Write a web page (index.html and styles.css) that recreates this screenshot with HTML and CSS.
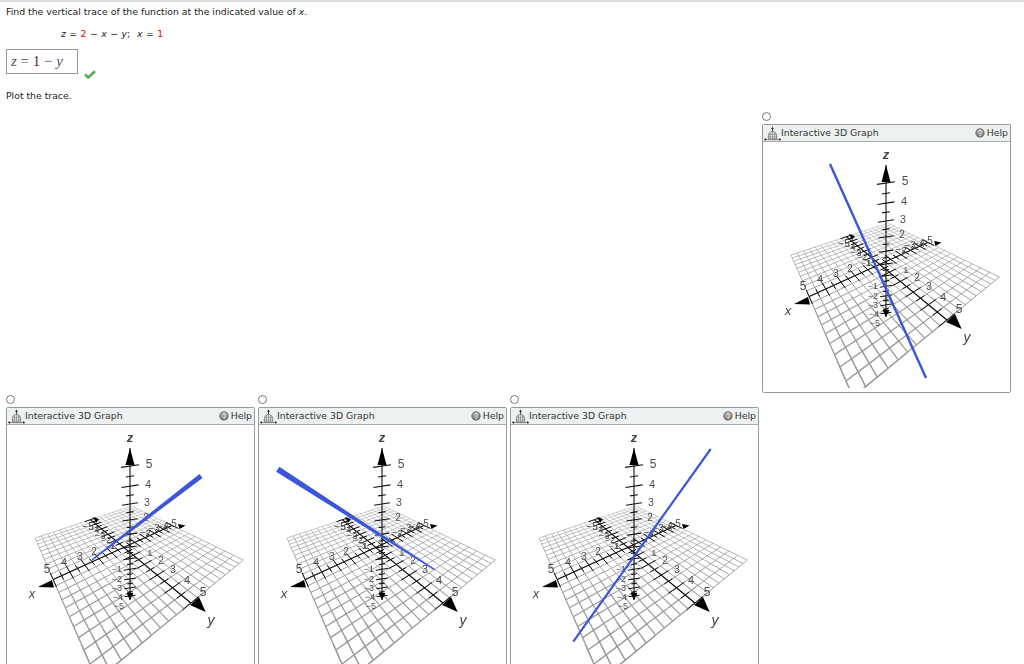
FILE: index.html
```html
<!DOCTYPE html>
<html lang="en">
<head>
<meta charset="utf-8">
<title>Vertical trace</title>
<link rel="stylesheet" href="styles.css">
</head>
<body>
<main class="page">
  <p class="question">Find the vertical trace of the function at the indicated value of <i>x</i>.</p>
  <p class="equation"><i>z</i> = <span class="given">2</span> − <i>x</i> − <i>y</i>;&nbsp; <i>x</i> = <span class="given">1</span></p>
  <div class="answer-row">
    <div class="answer"><i>z</i> = <span class="num">1</span> − <i>y</i></div>
    <svg class="check" viewBox="0 0 12 9"><path d="M1 4.5 L4.2 7.5 L11 1.2"/></svg>
  </div>
  <p class="plot">Plot the trace.</p>

  <div class="choices choices-top">
    <div class="choice">
      <input class="radio" type="radio" name="trace">
      <section class="graph">
        <header class="graph-head"><svg class="turtle" viewBox="0 0 20 17"><use href="#turtle-icon"/></svg><span class="graph-title">Interactive 3D Graph</span><span class="help"><svg class="help-icon" viewBox="0 0 10 10"><use href="#help-icon"/></svg>Help</span></header>
        <svg class="plot3d" viewBox="1 17 247 251"><line class="trace trace-mid" x1="68" y1="39" x2="164" y2="253"/></svg>
      </section>
    </div>
  </div>

  <div class="choices">
    <div class="choice">
      <input class="radio" type="radio" name="trace">
      <section class="graph">
        <header class="graph-head"><svg class="turtle" viewBox="0 0 20 17"><use href="#turtle-icon"/></svg><span class="graph-title">Interactive 3D Graph</span><span class="help"><svg class="help-icon" viewBox="0 0 10 10"><use href="#help-icon"/></svg>Help</span></header>
        <svg class="plot3d" viewBox="1 17 247 251"><polygon class="trace-fill" points="196.5,70 193.5,66 85.5,151.4 86.5,152.6"/></svg>
      </section>
    </div>
    <div class="choice">
      <input class="radio" type="radio" name="trace">
      <section class="graph">
        <header class="graph-head"><svg class="turtle" viewBox="0 0 20 17"><use href="#turtle-icon"/></svg><span class="graph-title">Interactive 3D Graph</span><span class="help"><svg class="help-icon" viewBox="0 0 10 10"><use href="#help-icon"/></svg>Help</span></header>
        <svg class="plot3d" viewBox="1 17 247 251"><polygon class="trace-fill" points="18.1,63.8 21.3,58.8 177.4,161.4 176.6,162.6"/></svg>
      </section>
    </div>
    <div class="choice">
      <input class="radio" type="radio" name="trace">
      <section class="graph">
        <header class="graph-head"><svg class="turtle" viewBox="0 0 20 17"><use href="#turtle-icon"/></svg><span class="graph-title">Interactive 3D Graph</span><span class="help"><svg class="help-icon" viewBox="0 0 10 10"><use href="#help-icon"/></svg>Help</span></header>
        <svg class="plot3d" viewBox="1 17 247 251"><line class="trace trace-thin" x1="200.7" y1="41" x2="63.3" y2="233.7"/></svg>
      </section>
    </div>
  </div>
</main>

<svg class="defs" aria-hidden="true">
  <symbol id="turtle-icon" viewBox="0 0 20 17">
    <path d="M10 0.5 V6 M8.5 2.5 H11.5" fill="none" stroke="#222" stroke-width="1"/>
    <path d="M5 15 Q4.5 6 10 6 Q15.5 6 15 15 Z" fill="#e6e9e9" stroke="#555" stroke-width=".8"/>
    <path d="M5.5 9.5 H14.5 M5 12.5 H15 M7.5 7 V15 M10 6 V15 M12.5 7 V15" fill="none" stroke="#666" stroke-width=".6"/>
    <path d="M1 15.8 H19" fill="none" stroke="#444" stroke-width=".7"/>
    <circle cx="1.5" cy="15.5" r="1.1" fill="#111"/><circle cx="18.5" cy="15.5" r="1.1" fill="#111"/>
  </symbol>
  <symbol id="help-icon" viewBox="0 0 10 10">
    <circle cx="5" cy="5" r="4.7" fill="#777"/>
    <circle cx="5" cy="4.2" r="3.2" fill="#a0a0a0"/>
    <path d="M3.6 3.8 Q3.7 2.4 5 2.4 Q6.4 2.4 6.4 3.6 Q6.4 4.4 5.4 4.9 L5.2 6" fill="none" stroke="#eee" stroke-width="1"/>
    <circle cx="5.2" cy="7.4" r=".7" fill="#eee"/>
  </symbol>
</svg>
<script src="script.js"></script>
</body>
</html>
```

FILE: styles.css
```css
html, body {
  margin: 0;
  height: 664px;
  overflow: hidden;
  background: #fff;
}
.page {
  border-top: 2px solid #dcdcdc;
  font-family: "DejaVu Sans", Verdana, sans-serif;
  font-size: 9.3px;
  color: #222;
  padding-left: 6px;
  padding-right: 13px;
}
p { margin: 0; }
.question { padding-top: 4px; line-height: 12px; }
.equation { padding: 10px 0 0 55px; line-height: 12px; word-spacing: .5px; }
.given { color: #e00; }
.answer-row { display: flex; align-items: flex-end; margin-top: 9px; gap: 6px; }
.answer {
  box-sizing: border-box;
  width: 72px;
  height: 25px;
  border: 1px solid #999;
  padding-left: 4px;
  font: 15px/23px "Liberation Serif", serif;
  color: #556;
}
.answer .num { color: #6b1f1f; }
.check { width: 12px; height: 9px; margin-bottom: -5px; }
.check path { fill: none; stroke: #5ea65e; stroke-width: 2.6; }
.plot { margin-top: 16px; line-height: 11px; }
.choices { display: flex; gap: 3px; }
.choices-top { justify-content: flex-end; margin-top: 11px; margin-bottom: 2px; }
.choice { display: flex; flex-direction: column; width: 249px; }
.radio {
  appearance: none;
  box-sizing: border-box;
  width: 9px;
  height: 9px;
  margin: 0 0 3px 0;
  border: 1px solid #777;
  border-radius: 50%;
  background: #fff;
}
.graph {
  box-sizing: border-box;
  width: 249px;
  height: 269px;
  border: 1px solid #999;
  border-radius: 2px;
  background: #fff;
  display: flex;
  flex-direction: column;
}
.graph-head {
  display: flex;
  align-items: center;
  height: 16px;
  flex: none;
  background: #eef1f1;
  border-bottom: 1px solid #aaa;
  line-height: 16px;
  color: #333;
}
.turtle { width: 17px; height: 15px; margin-left: 1px; flex: none; }
.help { margin-left: auto; margin-right: 2px; display: flex; align-items: center; gap: 2px; }
.help-icon { width: 10px; height: 10px; }
.plot3d { display: block; width: 247px; height: 251px; flex: none; }
.geometry { filter: blur(0.3px); }
.plane-line { stroke: #9a9a9a; fill: none; }
.axis { stroke: #111; stroke-width: 1.1; fill: none; }
.tick { stroke: #111; fill: none; }
.arrow { fill: #000; }
.lbl { font-family: "Liberation Sans", Arial, sans-serif; fill: #4d4d4d; text-anchor: middle; dominant-baseline: central; }
.name { font-style: italic; fill: #444; }
.name-z { font-weight: bold; }
.trace { stroke: #3d55d9; fill: none; }
.trace-mid { stroke-width: 2.4; }
.trace-thin { stroke-width: 2.2; }
.trace-fill { fill: #3d55d9; }
.defs { position: absolute; width: 0; height: 0; }
```

FILE: script.js
```js
(function () {
  var NS = 'http://www.w3.org/2000/svg';
  // plane corners in graph-local pixels
  var B = [126, 98], L = [29, 130], R = [237.3, 152], F = [91, 272];

  // square-to-quad homography: (u,v) => B,L(u=1),R(v=1),F
  var dx1 = L[0] - F[0], dx2 = R[0] - F[0], sx = B[0] - L[0] + F[0] - R[0];
  var dy1 = L[1] - F[1], dy2 = R[1] - F[1], sy = B[1] - L[1] + F[1] - R[1];
  var det = dx1 * dy2 - dx2 * dy1;
  var g = (sx * dy2 - dx2 * sy) / det;
  var h = (dx1 * sy - sx * dy1) / det;
  function P(x, y) {
    var u = (x + 5) / 10, v = (y + 5) / 10;
    var w = g * u + h * v + 1;
    return [
      ((L[0] - B[0] + g * L[0]) * u + (R[0] - B[0] + h * R[0]) * v + B[0]) / w,
      ((L[1] - B[1] + g * L[1]) * u + (R[1] - B[1] + h * R[1]) * v + B[1]) / w
    ];
  }
  function el(name, attrs, parent) {
    var e = document.createElementNS(NS, name);
    for (var k in attrs) e.setAttribute(k, attrs[k]);
    parent.appendChild(e);
    return e;
  }
  function seg(parent, a, b, cls, sw) {
    var attrs = { x1: a[0].toFixed(1), y1: a[1].toFixed(1), x2: b[0].toFixed(1), y2: b[1].toFixed(1), 'class': cls };
    if (sw) attrs['stroke-width'] = sw.toFixed(2);
    el('line', attrs, parent);
  }
  function zY(z) { return (139 - 19.05 * z) / (1 - 0.0492 * z); }
  function zScale(z) { return 1 / (1 - 0.0492 * z); }

  var labels = [
    ['5', 143, 56, 12], ['4', 142, 76, 11], ['3', 141, 94, 10.5], ['2', 140, 109, 10],
    ['−1', 111, 161, 9], ['−2', 111, 171, 9], ['−3', 111, 180, 9], ['−4', 112, 189, 9], ['−5', 113, 198, 9],
    ['5', 41, 161, 12], ['4', 58, 154, 11], ['3', 74, 148, 10.5], ['2', 88, 143, 10], ['1', 107, 138, 9],
    ['1', 144, 144, 9.5], ['2', 155, 152, 10], ['3', 167, 161, 10.5], ['4', 181, 172, 11], ['5', 197, 184, 12],
    ['−5', 82, 118, 10], ['−4', 88, 121, 9.5], ['−3', 94, 127, 9.5], ['−2', 100, 132, 9], ['−1', 104, 138, 9],
    ['−2', 139, 124, 9.5], ['−3', 148, 120, 10], ['−4', 157, 118, 10], ['−5', 165, 115, 10]
  ];
  var arrows = [
    [[124, 40], [119.5, 57], [128.5, 57]],
    [[124, 192], [120.5, 185], [127.5, 185]],
    [[32, 179], [46, 172], [48, 179.5]],
    [[199.7, 204], [193, 189], [184, 197]],
    [[179.5, 117.5], [172, 116], [173.5, 121]],
    [[87, 109], [93, 111], [90, 115]]
  ];

  var clipId = 0;
  document.querySelectorAll('.plot3d').forEach(function (svg) {
    var first = svg.firstChild;
    var geo = document.createElementNS(NS, 'g');
    geo.setAttribute('class', 'geometry');
    svg.insertBefore(geo, first);

    // plane
    var id = 'planeclip' + (clipId++);
    var clip = el('clipPath', { id: id }, geo);
    el('rect', { x: 0, y: 0, width: 248, height: 263 }, clip);
    var plane = el('g', { 'clip-path': 'url(#' + id + ')' }, geo);
    for (var i = 0; i <= 20; i++) {
      var c = -5 + i / 2;
      for (var j = 0; j < 8; j++) {
        var s = -5 + j * 1.25, e = s + 1.25;
        var a1 = P(c, s), a2 = P(c, e);
        seg(plane, a1, a2, 'plane-line', 0.4 + (a1[1] + a2[1] - 196) / 2 / 170 * 1.3);
        var b1 = P(s, c), b2 = P(e, c);
        seg(plane, b1, b2, 'plane-line', 0.4 + (b1[1] + b2[1] - 196) / 2 / 170 * 1.3);
      }
    }

    // x and y axes with ticks
    seg(geo, P(-5, 0), P(5, 0), 'axis');
    seg(geo, P(0, -5), P(0, 5), 'axis');
    for (var t = -10; t <= 10; t++) {
      if (t === 0) continue;
      var v = t / 2, len = t % 2 === 0 ? 0.6 : 0.32;
      seg(geo, P(v, -len), P(v, len), 'tick', 1);
      seg(geo, P(-len, v), P(len, v), 'tick', 1);
    }

    // z axis with ticks
    seg(geo, [124, 40], [124, 192], 'axis');
    for (var k = -10; k <= 10; k++) {
      var z = k / 2, half = (k % 2 === 0 ? 6.8 : 3.2) * zScale(z), y = zY(z);
      seg(geo, [124 - half, y + half * 0.15], [124 + half, y - half * 0.15], 'tick', 1.1);
    }

    // arrows
    arrows.forEach(function (a) {
      el('polygon', { 'class': 'arrow', points: a.map(function (p) { return p.join(','); }).join(' ') }, geo);
    });

    // labels
    labels.forEach(function (l) {
      var t = el('text', { 'class': 'lbl', x: l[1], y: l[2], 'font-size': l[3] }, geo);
      t.textContent = l[0];
    });
    var names = [['z', 124, 29, 13, 'lbl name name-z'], ['x', 26, 185, 13, 'lbl name'], ['y', 205, 212, 14, 'lbl name']];
    names.forEach(function (n) {
      var t = el('text', { 'class': n[4], x: n[1], y: n[2], 'font-size': n[3] }, geo);
      t.textContent = n[0];
    });
  });
})();
```
